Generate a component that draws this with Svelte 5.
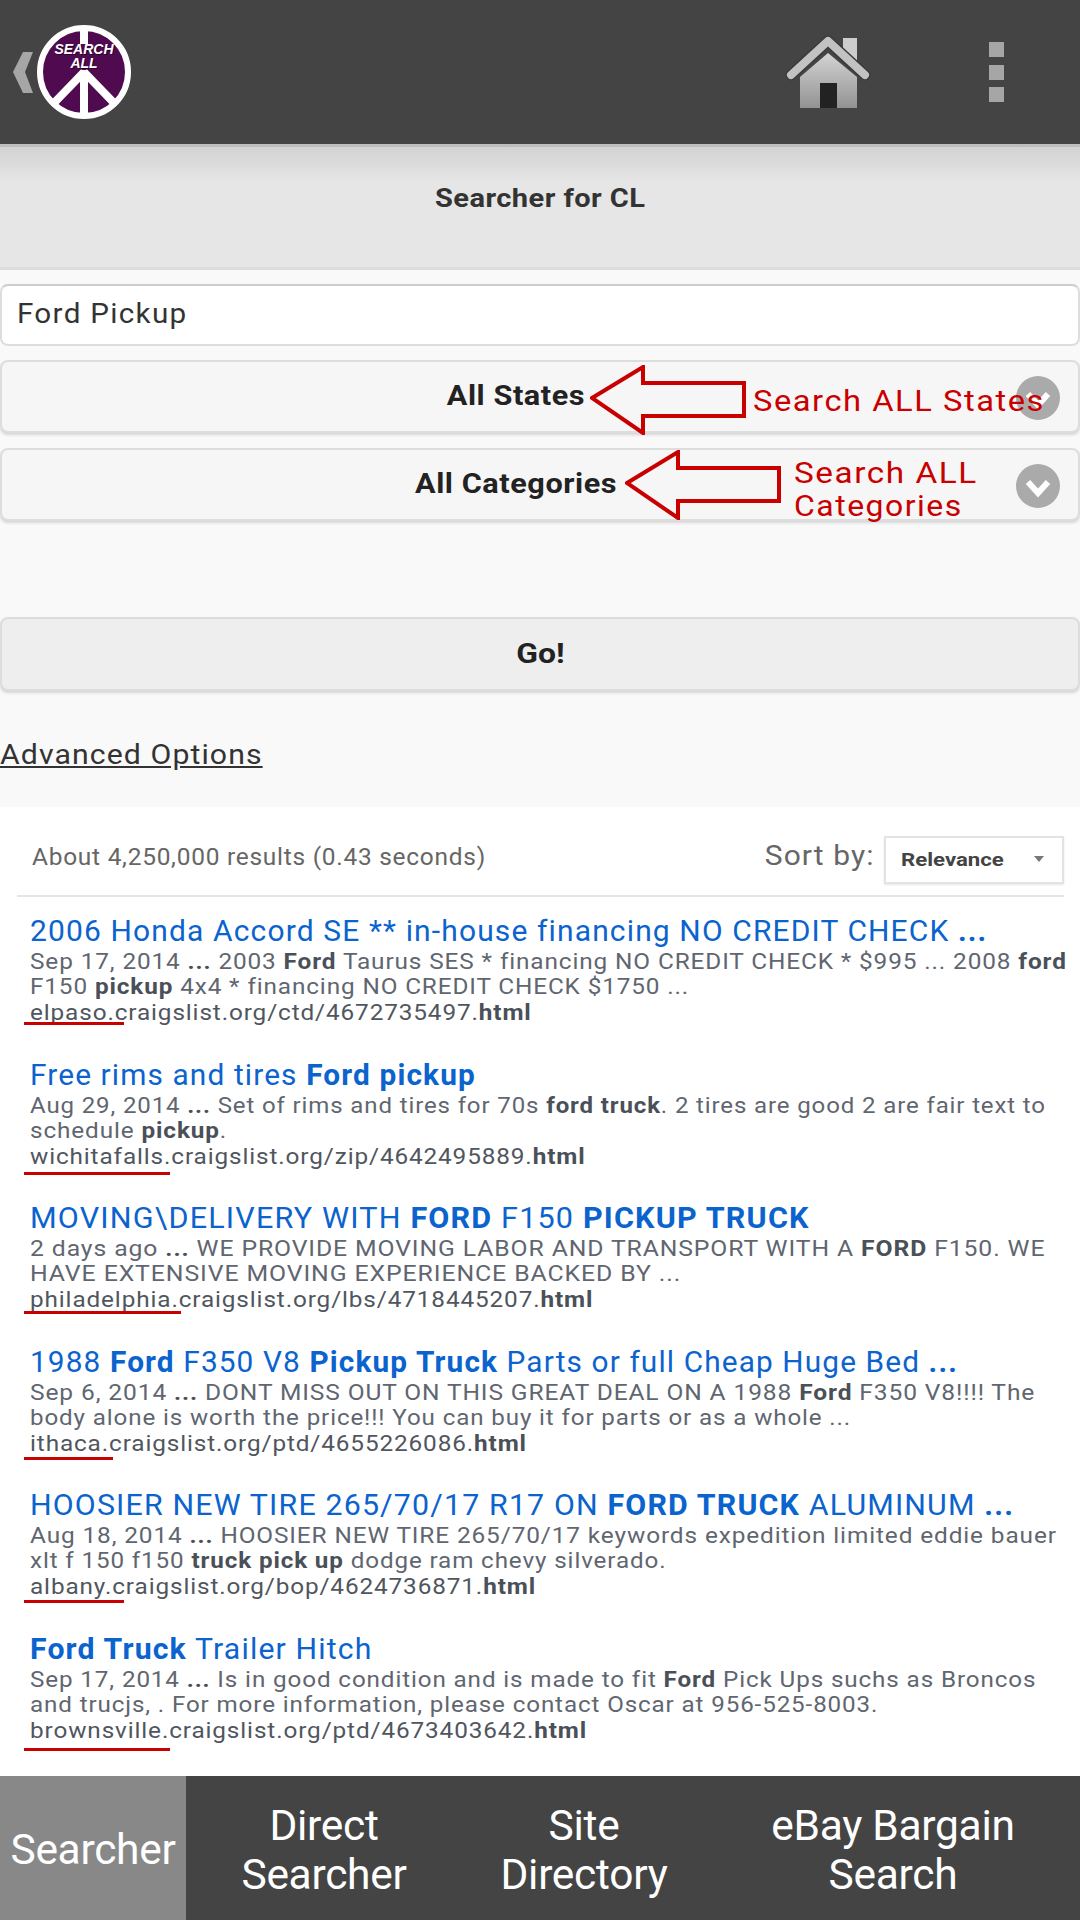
<script>
  const results = [
    { title: [['2006 Honda Accord SE ** in-house financing NO CREDIT CHECK ',0],['...',1]], ts: 1.034,
      l1: [['Sep 17, 2014 ',0],['...',1],[' 2003 ',0],['Ford',1],[' Taurus SES * financing NO CREDIT CHECK * $995 ... 2008 ',0],['ford',1]], s1: 1.107,
      l2: [['F150 ',0],['pickup',1],[' 4x4 * financing NO CREDIT CHECK $1750 ...',0]], s2: 1.105,
      host: 'elpaso.', path: 'craigslist.org/ctd/4672735497.', ulW: 100, ulY: 108 },
    { title: [['Free rims and tires ',0],['Ford pickup',1]], ts: 1.028,
      l1: [['Aug 29, 2014 ',0],['...',1],[' Set of rims and tires for 70s ',0],['ford truck',1],['. 2 tires are good 2 are fair text to',0]], s1: 1.092,
      l2: [['schedule ',0],['pickup',1],['.',0]], s2: 1.105,
      host: 'wichitafalls.', path: 'craigslist.org/zip/4642495889.', ulW: 146, ulY: 114 },
    { title: [['MOVING\\DELIVERY WITH ',0],['FORD',1],[' F150 ',0],['PICKUP TRUCK',1]], ts: 1.054,
      l1: [['2 days ago ',0],['...',1],[' WE PROVIDE MOVING LABOR AND TRANSPORT WITH A ',0],['FORD',1],[' F150. WE',0]], s1: 1.124,
      l2: [['HAVE EXTENSIVE MOVING EXPERIENCE BACKED BY ...',0]], s2: 1.128,
      host: 'philadelphia.', path: 'craigslist.org/lbs/4718445207.', ulW: 157, ulY: 110 },
    { title: [['1988 ',0],['Ford',1],[' F350 V8 ',0],['Pickup Truck',1],[' Parts or full Cheap Huge Bed ',0],['...',1]], ts: 1.027,
      l1: [['Sep 6, 2014 ',0],['...',1],[' DONT MISS OUT ON THIS GREAT DEAL ON A 1988 ',0],['Ford',1],[' F350 V8!!!! The',0]], s1: 1.115,
      l2: [['body alone is worth the price!!! You can buy it for parts or as a whole ...',0]], s2: 1.098,
      host: 'ithaca.', path: 'craigslist.org/ptd/4655226086.', ulW: 89, ulY: 112 },
    { title: [['HOOSIER NEW TIRE 265/70/17 R17 ON ',0],['FORD TRUCK',1],[' ALUMINUM ',0],['...',1]], ts: 1.047,
      l1: [['Aug 18, 2014 ',0],['...',1],[' HOOSIER NEW TIRE 265/70/17 keywords expedition limited eddie bauer',0]], s1: 1.108,
      l2: [['xlt f 150 f150 ',0],['truck pick up',1],[' dodge ram chevy silverado.',0]], s2: 1.1,
      host: 'albany.', path: 'craigslist.org/bop/4624736871.', ulW: 100, ulY: 112 },
    { title: [['Ford Truck',1],[' Trailer Hitch',0]], ts: 1.042,
      l1: [['Sep 17, 2014 ',0],['...',1],[' Is in good condition and is made to fit ',0],['Ford',1],[' Pick Ups suchs as Broncos',0]], s1: 1.101,
      l2: [['and trucjs, . For more information, please contact Oscar at 956-525-8003.',0]], s2: 1.099,
      host: 'brownsville.', path: 'craigslist.org/ptd/4673403642.', ulW: 146, ulY: 116 }
  ];
  const tabs = [
    { a: 'Searcher', active: true },
    { a: 'Direct', b: 'Searcher' },
    { a: 'Site', b: 'Directory' },
    { a: 'eBay Bargain', b: 'Search' }
  ];
</script>

{#snippet rich(parts)}{#each parts as p}{#if p[1]}<b>{p[0]}</b>{:else}{p[0]}{/if}{/each}{/snippet}

{#snippet chevron()}
  <svg class="chev" viewBox="0 0 44 44" width="44" height="44"><circle cx="22" cy="22" r="22" fill="#aaa"/><path d="M12 18 L22 29 L32 18" fill="none" stroke="#fff" stroke-width="6"/></svg>
{/snippet}

<div class="page">
  <header class="top">
    <div class="brand">
      <svg class="back" width="20" height="41" viewBox="0 0 20 41"><path d="M20 0 L10 0 L0 20 L10 41 L20 41 L12 20 Z" fill="#a6a6a6"/></svg>
      <div class="logo">
        <svg width="96" height="96" viewBox="0 0 96 96">
          <circle cx="48" cy="48" r="44" fill="#4f0a50" stroke="#fff" stroke-width="6"/>
          <path d="M48 6V20M48 46V90M48 48L18 79M48 48L78 79" stroke="#fff" stroke-width="8" fill="none"/>
        </svg>
        <span class="logotext">SEARCH<br/>ALL</span>
      </div>
    </div>
    <div class="actions">
      <svg class="home" width="86" height="78" viewBox="0 0 86 78">
        <defs><linearGradient id="hg" x1="0" y1="0" x2="0" y2="1"><stop offset="0" stop-color="#d4d4d4"/><stop offset="1" stop-color="#929292"/></linearGradient></defs>
        <path d="M58 5H72V28H58Z" fill="#cdcdcd"/>
        <path d="M15 44L43 20L72 44V75H15Z" fill="url(#hg)"/>
        <path d="M6 42L43 8L80 42" fill="none" stroke="#3a3a3a" stroke-width="11" stroke-linecap="round" stroke-linejoin="round"/>
        <path d="M6 42L43 8L80 42" fill="none" stroke="#c2c2c2" stroke-width="8" stroke-linecap="round" stroke-linejoin="round"/>
        <path d="M35 50H52V75H35Z" fill="#222"/>
      </svg>
      <div class="dots"><i></i><i></i><i></i></div>
    </div>
  </header>

  <div class="titlebar"><h1>Searcher for CL</h1></div>

  <section class="form">
    <div class="input"><span>Ford Pickup</span></div>

    <div class="select">
      <span class="sel-label">All States</span>
      {@render chevron()}
      <svg class="arrow a1" width="158" height="70" viewBox="0 0 158 70"><path d="M2 33 L53 2 L53 18 L154 18 L154 51 L53 51 L53 68 Z" fill="none" stroke="#c80000" stroke-width="4"/></svg>
      <span class="note n1">Search ALL States</span>
    </div>

    <div class="select">
      <span class="sel-label">All Categories</span>
      {@render chevron()}
      <svg class="arrow a2" width="158" height="70" viewBox="0 0 158 70"><path d="M2 33 L53 2 L53 18 L154 18 L154 51 L53 51 L53 68 Z" fill="none" stroke="#c80000" stroke-width="4"/></svg>
      <span class="note n2">Search ALL<span class="n2b">Categories</span></span>
    </div>

    <div class="go"><span>Go!</span></div>
    <a class="adv" href="#adv">Advanced Options</a>
  </section>

  <section class="results">
    <div class="meta">
      <span class="count">About 4,250,000 results (0.43 seconds)</span>
      <div class="sort">
        <span class="sortby">Sort by:</span>
        <div class="sortbox"><span class="rel">Relevance</span><i class="tri"></i></div>
      </div>
    </div>
    <div class="list">
      {#each results as r}
        <article class="res">
          <div class="rtitle" style="transform:scaleX({r.ts})">{@render rich(r.title)}</div>
          <div class="rline" style="transform:scaleX({r.s1})">{@render rich(r.l1)}</div>
          <div class="rline" style="transform:scaleX({r.s2})">{@render rich(r.l2)}</div>
          <div class="rline url">{r.host}{r.path}<b>html</b></div>
          <i class="uline" style="width:{r.ulW}px;top:{r.ulY}px"></i>
        </article>
      {/each}
    </div>
  </section>

  <nav class="tabs">
    {#each tabs as t}
      <div class="tab" class:active={t.active}><span>{t.a}</span>{#if t.b}<span>{t.b}</span>{/if}</div>
    {/each}
  </nav>
</div>

<style>
  :global(body) { margin: 0; background: #fff; }
  .page { width: 1080px; height: 1920px; display: flex; flex-direction: column; font-family: Roboto, "Liberation Sans", sans-serif; overflow: hidden; }

  .top { height: 144px; background: #444; display: flex; justify-content: space-between; align-items: center; flex: none; }
  .brand { display: flex; align-items: center; padding-left: 13px; gap: 3px; }
  .logo { position: relative; width: 96px; height: 96px; }
  .logo svg { display: block; }
  .logotext { position: absolute; left: 0; right: 0; top: 18px; text-align: center; color: #fff; font: italic 700 14px/14px "Liberation Sans", sans-serif; text-shadow: 1px 1px 0 #2a002a; }
  .actions { display: flex; align-items: center; padding-right: 76px; gap: 118px; }
  .home { display: block; }
  .dots { display: flex; flex-direction: column; gap: 7.5px; }
  .dots i { display: block; width: 15px; height: 15px; background: #a6a6a6; }

  .titlebar { height: 126px; flex: none; box-sizing: border-box; border-top: 3px solid #bdbdbd; border-bottom: 3px solid #dcdcdc; background: linear-gradient(#d2d2d2 0, #e6e6e6 36px); display: flex; align-items: center; justify-content: center; }
  h1 { margin: 0 0 18px; font-size: 26px; font-weight: 700; color: #333; letter-spacing: .4px; transform: scaleX(1.117); }

  .form { height: 537px; flex: none; background: #f9f9f9; box-sizing: border-box; padding-top: 14px; position: relative; }
  .input { height: 62px; margin-bottom: -1px; box-sizing: border-box; background: #fff; border: 2px solid #ddd; border-top-color: #ccc; border-radius: 8px; display: flex; align-items: center; padding-left: 15px; font-size: 28px; color: #333; letter-spacing: 1.2px; }
  .input span { margin-top: -4px; transform: scaleX(1.06); transform-origin: left; }
  .select { position: relative; height: 73px; margin-top: 15px; box-sizing: border-box; background: #f6f6f6; border: 2px solid #ddd; border-radius: 8px; box-shadow: 0 2px 3px rgba(0,0,0,.15); display: flex; align-items: center; justify-content: center; font-size: 27px; font-weight: 700; color: #222; letter-spacing: .5px; }
  .sel-label { margin: -2px 48px 0 0; transform: scaleX(1.135); }
  .chev { position: absolute; right: 18px; top: 14px; }
  .arrow { position: absolute; }
  .a1 { left: 588px; top: 3px; }
  .a2 { left: 623px; top: 0; }
  .note { position: absolute; color: #c80000; font-size: 30px; font-weight: 400; letter-spacing: 1.4px; line-height: 33px; white-space: nowrap; transform: scaleX(1.09); transform-origin: left; }
  .n1 { left: 751px; top: 22px; }
  .n2 { left: 792px; top: 6px; transform: scaleX(1.11); }
  .n2b { display: block; transform: scaleX(.96); transform-origin: left; }
  .go { height: 74px; margin-top: 96px; box-sizing: border-box; background: #eee; border: 2px solid #ddd; border-radius: 8px; box-shadow: 0 2px 3px rgba(0,0,0,.15); display: flex; align-items: center; justify-content: center; font-size: 27px; font-weight: 700; color: #222; }
  .go span { transform: scaleX(1.18); }
  .adv { display: block; width: max-content; margin-top: 47px; font-size: 28px; color: #333; letter-spacing: 1px; text-decoration: underline; transform: scaleX(1.08); transform-origin: left; }

  .results { flex: 1; background: #fff; padding: 0 14px 0 17px; min-height: 0; }
  .meta { height: 90px; box-sizing: border-box; border-bottom: 2px solid #e5e5e5; display: flex; justify-content: space-between; align-items: flex-start; padding: 29px 0 0 15px; margin-right: 2px; }
  .count { font-size: 23px; line-height: 44px; color: #666; letter-spacing: .7px; transform: scaleX(1.063); transform-origin: left; }
  .sort { display: flex; align-items: center; gap: 10px; }
  .sortby { font-size: 28px; margin-top: -9px; color: #666; letter-spacing: 1px; transform: scaleX(1.07); transform-origin: right; }
  .sortbox { width: 180px; height: 48px; box-sizing: border-box; border: 2px solid #e3e3e3; background: #fff; box-shadow: 0 1px 2px rgba(0,0,0,.1); display: flex; align-items: center; justify-content: space-between; padding: 0 18px 0 15px; font-size: 19px; font-weight: 700; color: #444; }
  .rel { margin-top: -2px; transform: scaleX(1.167); transform-origin: left; }
  .tri { width: 0; height: 0; margin-top: -2px; border: 5px solid transparent; border-top: 6px solid #777; border-bottom: 0; }
  .list { padding: 17px 0 0 13px; }
  .res { height: 143.6px; position: relative; }
  .rtitle { font-size: 29px; line-height: 34px; margin-bottom: 1px; color: #0b63ce; letter-spacing: 1.1px; white-space: nowrap; transform-origin: left; }
  .rline { font-size: 22px; line-height: 25px; color: #5f6670; letter-spacing: .8px; white-space: nowrap; transform: scaleX(1.105); transform-origin: left; }
  .rline b { color: #4a5058; }
  .url { color: #50565e; margin-top: 1px; }
  .uline { position: absolute; left: -6px; height: 3px; background: #c80000; }

  .tabs { height: 144px; flex: none; background: #444; display: grid; grid-template-columns: 186px 276px 244px 374px; }
  .tab { display: flex; flex-direction: column; align-items: center; justify-content: center; color: #fff; font-size: 42.5px; line-height: 49px; letter-spacing: -.3px; padding-top: 3px; box-sizing: border-box; }
  .tab.active { background: #888; }
</style>
